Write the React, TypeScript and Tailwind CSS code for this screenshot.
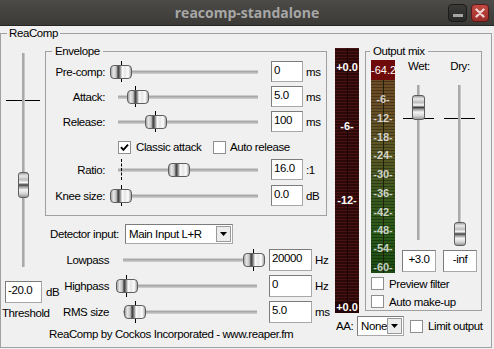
import React from "react";

const FONT = "font-['Liberation_Sans',Arial,sans-serif] tracking-[-0.4px]";
const METERFONT = "font-['Liberation_Sans',Arial,sans-serif] tracking-normal";

function Edit({ text, cls, center }: { text: string; cls: string; center?: boolean }) {
  return (
    <div
      className={`${cls} shrink-0 bg-white border border-[#a8a8a8] border-t-[#7c7c7c] border-l-[#7c7c7c] px-[2px] leading-[17px] text-black whitespace-nowrap overflow-hidden ${center ? "text-center" : "text-left"}`}
    >
      {text}
    </div>
  );
}

function Check({ checked }: { checked?: boolean }) {
  return (
    <div className="w-[13px] h-[13px] shrink-0 bg-white border border-[#8e8f8f] flex items-center justify-center">
      {checked && (
        <svg width="9" height="9" viewBox="0 0 9 9">
          <path d="M1 4.2 L3.4 6.8 L8 1.6" stroke="#000" strokeWidth="1.9" fill="none" />
        </svg>
      )}
    </div>
  );
}

function Combo({ text, cls }: { text: string; cls: string }) {
  return (
    <div
      className={`${cls} shrink-0 h-[20px] bg-white border border-[#a8a8a8] border-t-[#7c7c7c] border-l-[#7c7c7c] flex items-center justify-between pl-[3px] pr-[1px]`}
    >
      <span className="leading-[16px] whitespace-nowrap">{text}</span>
      <div className="w-[15px] h-[16px] bg-[#ececec] border border-[#9a9a9a] flex items-center justify-center">
        <svg width="7" height="4" viewBox="0 0 7 4">
          <path d="M0 0H7L3.5 4Z" fill="#000" />
        </svg>
      </div>
    </div>
  );
}

function HThumb({ left }: { left: number }) {
  return (
    <div
      className="absolute top-1/2 -translate-y-1/2 w-[22px] h-[14px] rounded-[4px] border border-[#5e5e5e] bg-[linear-gradient(to_right,#a4a4a4_0%,#e6e6e6_12%,#c4c4c4_26%,#3a3a3a_36%,#8e8e8e_46%,#fbfbfb_56%,#e6e6e6_70%,#fdfdfd_86%,#a8a8a8_100%)]"
      style={{ left }}
    />
  );
}

function HSlider({
  cls,
  trackCls,
  thumb,
  tick,
  dashed,
}: {
  cls: string;
  trackCls: string;
  thumb: number;
  tick: number;
  dashed?: boolean;
}) {
  return (
    <div className={`${cls} relative shrink-0`}>
      <div className={`${trackCls} absolute top-1/2 -translate-y-1/2 h-[3px] bg-[#a9a9a9] border-b border-[#c8c8c8]`} />
      <div
        className={`absolute top-0 bottom-0 w-0 border-l border-black ${dashed ? "border-dashed" : "border-solid"}`}
        style={{ left: tick }}
      />
      <HThumb left={thumb} />
    </div>
  );
}

function VThumb({ cls }: { cls: string }) {
  return (
    <div
      className={`${cls} absolute rounded-[3px] border border-[#5e5e5e] bg-[linear-gradient(to_bottom,#a0a0a0_0%,#eaeaea_12%,#bcbcbc_28%,#fafafa_40%,#3c3c3c_50%,#8c8c8c_56%,#f4f4f4_70%,#d8d8d8_85%,#9a9a9a_100%)]`}
    />
  );
}

function EnvRow({
  label,
  thumb,
  tick,
  dashed,
  value,
  unit,
  mt,
}: {
  label: string;
  thumb: number;
  tick: number;
  dashed?: boolean;
  value: string;
  unit: string;
  mt: string;
}) {
  return (
    <div className={`${mt} flex items-center h-[21px]`}>
      <div className="w-[59px] shrink-0 text-right leading-[14px] whitespace-nowrap">{label}</div>
      <HSlider cls="ml-[5px] w-[150px] h-[21px]" trackCls="left-[8px] right-[2px]" thumb={thumb} tick={tick} dashed={dashed} />
      <Edit cls="ml-[11px] w-[32px] h-[21px]" text={value} />
      <span className="ml-[3px] leading-[14px]">{unit}</span>
    </div>
  );
}

function LowRow({
  label,
  thumb,
  tick,
  value,
  unit,
  mt,
}: {
  label: string;
  thumb: number;
  tick: number;
  value: string;
  unit: string;
  mt: string;
}) {
  return (
    <div className={`${mt} flex items-center h-[22px]`}>
      <div className="w-[64px] shrink-0 text-right leading-[14px] whitespace-nowrap">{label}</div>
      <HSlider cls="ml-[7px] w-[150px] h-[22px]" trackCls="left-[7px] right-[9px]" thumb={thumb} tick={tick} />
      <Edit cls="ml-[3px] w-[43px] h-[22px]" text={value} />
      <span className="ml-[3px] leading-[14px]">{unit}</span>
    </div>
  );
}

const outLabels = [
  { t: "-6-", top: 33 },
  { t: "-12-", top: 52 },
  { t: "-18-", top: 71 },
  { t: "-24-", top: 89 },
  { t: "-30-", top: 108 },
  { t: "-36-", top: 127 },
  { t: "-42-", top: 146 },
  { t: "-48-", top: 164 },
  { t: "-54-", top: 182 },
  { t: "-60-", top: 201 },
];

function InputMeter() {
  return (
    <div
      className={`${METERFONT} relative mt-[8px] w-[24px] h-[265px] shrink-0 bg-[repeating-linear-gradient(to_bottom,#4a1313_0px,#4a1313_1px,#2c0808_1px,#2c0808_3px)] text-white font-bold text-[11px] leading-[12px]`}
    >
      <div className="absolute left-1/2 top-0 bottom-0 w-px bg-[#1a0505]" />
      <div className="absolute left-0 right-0 top-[13px] text-center">+0.0</div>
      <div className="absolute left-0 right-0 top-[72px] text-center">-6-</div>
      <div className="absolute left-0 right-0 top-[146px] text-center">-12-</div>
      <div className="absolute left-0 right-0 bottom-0 h-[11px] bg-[#240404] text-center leading-[11px]">+0.0</div>
    </div>
  );
}

function OutputMeter() {
  return (
    <div
      className={`${METERFONT} relative w-[24px] h-[213px] shrink-0 bg-[repeating-linear-gradient(to_bottom,rgba(0,0,0,0.32)_0px,rgba(0,0,0,0.32)_1px,transparent_1px,transparent_3px),linear-gradient(to_bottom,#6e4a26_0%,#6a4e26_20%,#595824_45%,#3a5a1e_65%,#2a5a18_82%,#1c4a10_100%)] text-[11px] leading-[12px]`}
    >
      <div className="absolute left-1/2 top-0 bottom-0 w-px bg-[#1e1e0a]" />
      <div className="absolute left-0 right-0 top-0 h-[20px] bg-[#6e0a0a] text-white text-center leading-[20px]">-64.2</div>
      {outLabels.map((l) => (
        <div key={l.t} className="absolute left-0 right-0 text-center text-white/75 font-bold" style={{ top: l.top }}>
          {l.t}
        </div>
      ))}
    </div>
  );
}

function TitleBar() {
  return (
    <div className="h-[26px] grid grid-cols-[1fr_auto_1fr] items-center bg-[linear-gradient(to_bottom,#4c4b47,#3b3a36)] border-b border-[#262624] tracking-normal">
      <div />
      <div className="font-['Open_Sans',sans-serif] font-bold text-[14px] text-[#a7a7a7] leading-none pt-[1px]">
        reacomp-standalone
      </div>
      <div className="flex justify-end gap-[4px] pr-[5px]">
        <div className="w-[19px] h-[18px] rounded-[4px] border border-[#1c1c1c] bg-[linear-gradient(to_bottom,#3a3a38,#2a2a28)] flex flex-col items-center justify-end pb-[4px]">
          <div className="w-[10px] h-[3px] bg-[#a6a6a6]" />
        </div>
        <div className="w-[18px] h-[18px] rounded-[4px] border border-[#5a1a1a] bg-[linear-gradient(to_bottom,#c24a44,#9c2c28)] flex items-center justify-center">
          <svg width="10" height="10" viewBox="0 0 10 10">
            <path d="M1.5 1.5 L8.5 8.5 M8.5 1.5 L1.5 8.5" stroke="#f2d2d0" strokeWidth="2.4" strokeLinecap="round" />
          </svg>
        </div>
      </div>
    </div>
  );
}

export default function App() {
  return (
    <div className={`w-[494px] h-[349px] bg-[#f0f0f0] overflow-hidden text-[11.5px] text-black ${FONT}`}>
      <TitleBar />
      <fieldset className="w-[492px] h-[322px] border border-[#a0a0a0] m-0 p-0 min-w-0">
        <legend className="ml-[6px] px-[2px] leading-[14px]">ReaComp</legend>
        <div className="flex">
          {/* Threshold column */}
          <div className="w-[44px] shrink-0 flex flex-col">
            <div className="relative mt-[13px] ml-[4px] w-[36px] h-[214px]">
              <div className="absolute top-[47px] left-[1px] w-[34px] h-px bg-black" />
              <div className="absolute left-[17px] w-[3px] top-0 bottom-0 bg-[#a9a9a9] border-r border-[#c8c8c8]" />
              <VThumb cls="left-[13px] top-[119px] w-[11px] h-[26px]" />
            </div>
            <div className="flex items-center mt-[14px] ml-[4px]">
              <Edit cls="w-[37px] h-[22px]" text="-20.0" />
              <span className="ml-[4px] whitespace-nowrap leading-[14px]">dB</span>
            </div>
            <div className="mt-[3px] ml-[1px] leading-[14px] whitespace-nowrap">Threshold</div>
          </div>

          {/* Middle column */}
          <div className="w-[282px] shrink-0 flex flex-col">
            <fieldset className="mt-[4px] w-[282px] border border-[#a0a0a0] m-0 px-0 pt-0 pb-[9px] min-w-0">
              <legend className="ml-[6px] px-[3px] leading-[14px]">Envelope</legend>
              <div className="flex flex-col">
                <EnvRow mt="mt-[3px]" label="Pre-comp:" thumb={0} tick={11} value="0" unit="ms" />
                <EnvRow mt="mt-[4px]" label="Attack:" thumb={17} tick={25} value="5.0" unit="ms" />
                <EnvRow mt="mt-[4px]" label="Release:" thumb={35} tick={45} value="100" unit="ms" />
                <div className="mt-[5px] h-[20px] flex items-center">
                  <div className="ml-[72px] w-[95px] flex items-center shrink-0">
                    <Check checked />
                    <span className="ml-[5px] leading-[14px] whitespace-nowrap">Classic attack</span>
                  </div>
                  <Check />
                  <span className="ml-[4px] leading-[14px] whitespace-nowrap">Auto release</span>
                </div>
                <EnvRow mt="mt-[2px]" label="Ratio:" thumb={58} tick={11} dashed value="16.0" unit=":1" />
                <EnvRow mt="mt-[5px]" label="Knee size:" thumb={0} tick={11} value="0.0" unit="dB" />
              </div>
            </fieldset>

            <div className="mt-[8px] h-[20px] flex items-center">
              <div className="ml-[5px] w-[75px] shrink-0 leading-[14px] whitespace-nowrap">Detector input:</div>
              <Combo cls="w-[108px]" text="Main Input L+R" />
            </div>

            <LowRow mt="mt-[5px]" label="Lowpass" thumb={127} tick={137} value="20000" unit="Hz" />
            <LowRow mt="mt-[4px]" label="Highpass" thumb={0} tick={10} value="0" unit="Hz" />
            <LowRow mt="mt-[4px]" label="RMS size" thumb={8} tick={19} value="5.0" unit="ms" />

            <div className="mt-[5px] ml-[4px] leading-[13px] whitespace-nowrap">
              ReaComp by Cockos Incorporated - www.reaper.fm
            </div>
          </div>

          {/* Right area */}
          <div className="ml-[8px] flex flex-col">
            <div className="flex items-start">
              <InputMeter />
              <fieldset className="ml-[6px] mt-[4px] w-[117px] border border-[#a0a0a0] m-0 px-0 pt-0 pb-[2px] min-w-0">
                <legend className="ml-[4px] px-[3px] leading-[14px]">Output mix</legend>
                <div className="flex mt-[2px] ml-[5px]">
                  <OutputMeter />
                  <div className="ml-[7px] w-[34px] flex flex-col">
                    <div className="h-[13px] leading-[13px] text-center">Wet:</div>
                    <div className="relative mt-[5px] h-[170px]">
                      <div className="absolute top-[40px] left-[1px] w-[31px] h-px bg-black" />
                      <div className="absolute left-[15px] w-[3px] top-[7px] bottom-[8px] bg-[#a9a9a9] border-r border-[#c8c8c8]" />
                      <VThumb cls="left-[10px] top-[17px] w-[13px] h-[25px]" />
                    </div>
                    <Edit cls="mt-[2px] w-[34px] h-[22px]" text="+3.0" center />
                  </div>
                  <div className="ml-[7px] w-[34px] flex flex-col">
                    <div className="h-[13px] leading-[13px] text-center">Dry:</div>
                    <div className="relative mt-[5px] h-[170px]">
                      <div className="absolute top-[40px] left-[1px] w-[31px] h-px bg-black" />
                      <div className="absolute left-[15px] w-[3px] top-[7px] bottom-[4px] bg-[#a9a9a9] border-r border-[#c8c8c8]" />
                      <VThumb cls="left-[11px] top-[144px] w-[12px] h-[24px]" />
                    </div>
                    <Edit cls="mt-[2px] w-[34px] h-[22px]" text="-inf" center />
                  </div>
                </div>
                <div className="flex items-center ml-[5px] mt-[4px] h-[13px]">
                  <Check />
                  <span className="ml-[5px] leading-[14px] whitespace-nowrap">Preview filter</span>
                </div>
                <div className="flex items-center ml-[5px] mt-[5px] h-[13px]">
                  <Check />
                  <span className="ml-[5px] leading-[14px] whitespace-nowrap">Auto make-up</span>
                </div>
              </fieldset>
            </div>
            <div className="mt-[3px] h-[20px] flex items-center">
              <div className="ml-[1px] w-[21px] shrink-0 leading-[14px]">AA:</div>
              <Combo cls="w-[47px]" text="None" />
              <div className="ml-[6px]">
                <Check />
              </div>
              <span className="ml-[5px] leading-[14px] whitespace-nowrap">Limit output</span>
            </div>
          </div>
        </div>
      </fieldset>
    </div>
  );
}
